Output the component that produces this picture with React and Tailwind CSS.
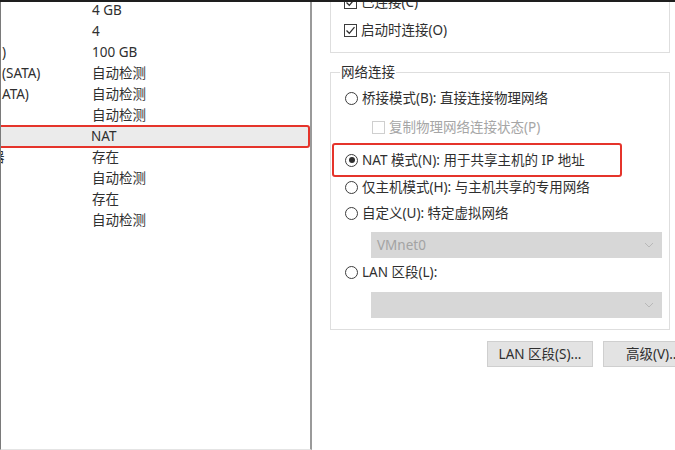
const FONT = { fontFamily: '"Noto Sans", "Noto Sans CJK SC", sans-serif' };

const HW = [
  { label: '', value: '4 GB' },
  { label: '', value: '4' },
  { label: ')', value: '100 GB' },
  { label: '(SATA)', value: '自动检测' },
  { label: 'ATA)', value: '自动检测' },
  { label: '', value: '自动检测' },
  { label: '', value: 'NAT', selected: true },
  { label: '器', value: '存在', cut: true },
  { label: '', value: '自动检测' },
  { label: '', value: '存在' },
  { label: '', value: '自动检测' },
];

function Radio({ checked }) {
  return (
    <span className="w-[13px] h-[13px] rounded-full border border-[#3c3c3c] bg-white grid place-items-center shrink-0">
      {checked && <span className="w-[6px] h-[6px] rounded-full bg-[#2e2e2e]" />}
    </span>
  );
}

function Check({ checked, disabled }) {
  return (
    <span className={`w-[13px] h-[13px] border grid place-items-center shrink-0 bg-white ${disabled ? 'border-[#cfcfcf]' : 'border-[#3c3c3c]'}`}>
      {checked && (
        <svg width="11" height="11" viewBox="0 0 11 11">
          <path d="M1.5 5.5 L4.3 8.3 L9.5 2.2" fill="none" stroke="#2e2e2e" strokeWidth="1.3" />
        </svg>
      )}
    </span>
  );
}

function Row({ children, className = '' }) {
  return <div className={`h-[20px] flex items-center gap-[4px] ${className}`}>{children}</div>;
}

function Select({ value }) {
  return (
    <div className="ml-[26px] w-[291px] h-[26px] bg-[#d7d7d7] flex items-center justify-between pl-[6px] pr-[8px]">
      <span className="text-[#a3a3a3]">{value}</span>
      <svg width="10" height="6" viewBox="0 0 10 6">
        <path d="M1 1 L5 5 L9 1" fill="none" stroke="#b8b8b8" strokeWidth="1" />
      </svg>
    </div>
  );
}

export default function App() {
  return (
    <div className="relative w-[675px] h-[450px] bg-white flex overflow-hidden text-[13.5px] text-[#2f2f2f]" style={FONT}>
      <div className="absolute top-0 left-0 right-0 h-[2px] bg-[#1e1e1e] z-10" />

      {/* hardware list */}
      <div className="w-[312px] h-full border-l border-l-[#7a7a7a] border-r-2 border-r-[#9a9a9a] border-b border-b-[#e4e4e4] overflow-hidden">
        {HW.map((r, i) =>
          r.selected ? (
            <div key={i} className="-my-[1px] h-[23px] -ml-[4px] bg-[#ebebeb] border-2 border-[#e5342b] rounded-[3px] flex items-center">
              <span className="ml-[92px]">{r.value}</span>
            </div>
          ) : (
            <div key={i} className="h-[21px] flex items-center">
              <span className={`w-[91px] whitespace-nowrap ${r.cut ? '-ml-[10px]' : 'pl-[1px]'}`}>{r.label}</span>
              {r.cut && <span className="w-[10px]" />}
              <span>{r.value}</span>
            </div>
          )
        )}
      </div>

      {/* adapter settings */}
      <div className="flex-1 h-full pl-[18px] pr-[5px] overflow-hidden">
        <div className="-mt-[20px] border border-[#dedede] pt-[11px] pb-[12px] pl-[13px] flex flex-col gap-[8px]">
          <Row>
            <Check checked />
            <span>已连接(C)</span>
          </Row>
          <Row>
            <Check checked />
            <span>启动时连接(O)</span>
          </Row>
        </div>

        <fieldset className="mt-[10px] border border-[#dedede] pl-[14px] pb-[11px]">
          <legend className="-ml-[5px] px-[1px] leading-[18px]">网络连接</legend>
          <Row className="mt-[7px]">
            <Radio />
            <span>桥接模式(B): 直接连接物理网络</span>
          </Row>
          <Row className="mt-[9px] ml-[27px] text-[#a6a6a6]">
            <Check disabled />
            <span>复制物理网络连接状态(P)</span>
          </Row>
          <div className="mt-[6px] -ml-[13px] w-[290px] h-[34px] border-2 border-[#e5342b] rounded-[3px] flex items-center gap-[4px] pl-[11px]">
            <Radio checked />
            <span>NAT 模式(N): 用于共享主机的 IP 地址</span>
          </div>
          <Row>
            <Radio />
            <span>仅主机模式(H): 与主机共享的专用网络</span>
          </Row>
          <Row className="mt-[6px]">
            <Radio />
            <span>自定义(U): 特定虚拟网络</span>
          </Row>
          <div className="mt-[9px]">
            <Select value="VMnet0" />
          </div>
          <Row className="mt-[4px]">
            <Radio />
            <span>LAN 区段(L):</span>
          </Row>
          <div className="mt-[10px]">
            <Select value="" />
          </div>
        </fieldset>

        <div className="mt-[11px] pl-[157px] flex gap-[10px]">
          <button type="button" className="w-[106px] h-[26px] shrink-0 bg-[#e3e3e3] border border-[#cfcfcf]">
            LAN 区段(S)...
          </button>
          <button type="button" className="w-[100px] h-[26px] shrink-0 bg-[#e3e3e3] border border-[#cfcfcf]">
            高级(V)...
          </button>
        </div>
      </div>
    </div>
  );
}
